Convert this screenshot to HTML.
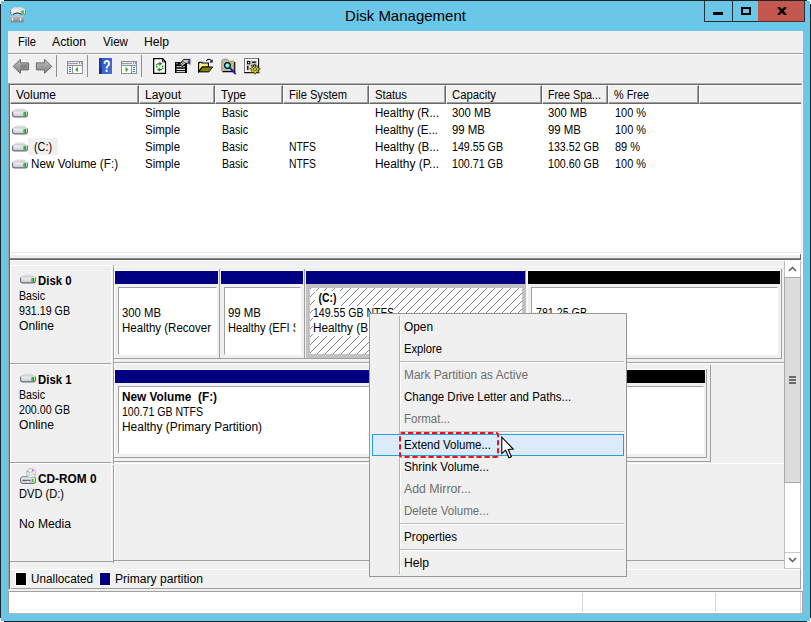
<!DOCTYPE html>
<html lang="en">
<head>
<meta charset="utf-8">
<title>Disk Management</title>
<style>
*{box-sizing:border-box;margin:0;padding:0}
html,body{width:811px;height:622px;overflow:hidden;background:#fff}
body{position:relative;font-family:"Liberation Sans",sans-serif;font-size:12px;color:#000;line-height:1}
.a,.t{position:absolute}
.t{white-space:nowrap;font-size:12px;line-height:14px;height:14px;transform-origin:0 0}
.b{font-weight:bold}
.w{background:#fff;height:15px !important}
#win{position:absolute;left:0;top:0;width:811px;height:622px;background:#6ac7e8;border-radius:4px}
.fb{position:absolute;background:#1c2428}
#client{position:absolute;left:8px;top:31px;width:795px;height:583px;background:#f0f0f0}
#title{position:absolute;left:0;top:7px;width:811px;text-align:center;font-size:15px;line-height:18px;color:#000}
.cap{position:absolute;top:1px;height:21px}
.g{color:#6d6d6d}
.hd{position:absolute;top:85px;height:19px;background:#f0f0f0;border-left:1px solid #fff;border-top:1px solid #fff;border-right:1px solid #696969;border-bottom:1px solid #696969;box-shadow:inset -1px -1px 0 #a0a0a0}
.bar{position:absolute;height:13px;background:#000080}
.box{position:absolute;height:68px;background:#fff;border:1px solid #a0a0a0;border-right-color:#fff;border-bottom-color:#fff}
.mi{position:absolute;left:404px;white-space:nowrap;font-size:12px;line-height:14px;height:14px;transform-origin:0 0}
.ms{position:absolute;left:400px;width:224px;height:2px;background:#fff;border-top:1px solid #bdbdbd}
</style>
</head>
<body>
<div id="win"></div>
<div class="a" style="left:0px;top:0px;width:4px;height:1px;background:#fff"></div><div class="a" style="left:807px;top:0px;width:4px;height:1px;background:#fff"></div><div class="a" style="left:0px;top:621px;width:4px;height:1px;background:#fff"></div><div class="a" style="left:807px;top:621px;width:4px;height:1px;background:#fff"></div><div class="a" style="left:0px;top:0px;width:1px;height:4px;background:#fff"></div><div class="a" style="left:810px;top:0px;width:1px;height:4px;background:#fff"></div><div class="a" style="left:0px;top:618px;width:1px;height:4px;background:#fff"></div><div class="a" style="left:810px;top:618px;width:1px;height:4px;background:#fff"></div><div class="fb" style="left:4px;top:0;width:803px;height:1px"></div><div class="fb" style="left:4px;top:621px;width:803px;height:1px"></div><div class="fb" style="left:0;top:4px;width:1px;height:614px"></div><div class="fb" style="left:810px;top:4px;width:1px;height:614px"></div>
<div id="title">Disk Management</div>

<div class="cap" style="left:704px;width:29px;border:1px solid #1f3038;border-top:0"></div>
<div class="cap" style="left:732px;width:27px;border:1px solid #1f3038;border-top:0;border-right:0"></div>
<div class="cap" style="left:758px;width:47px;background:#c5584e;border-right:1px solid #1f3038;border-bottom:1px solid #5a2a28"></div>
<div class="a" style="left:713px;top:12px;width:10px;height:3px;background:#000"></div>
<div class="a" style="left:741px;top:7px;width:10px;height:8px;border:2px solid #000"></div>
<svg class="a" style="left:777px;top:7px" width="10" height="8" viewBox="0 0 10 8"><path d="M1.2 0 L8.8 8 M8.8 0 L1.2 8" stroke="#000" stroke-width="2.5"/></svg>
<div id="client"></div>

<div class="t" style="left:18px;top:35px;transform:scaleX(0.931)">File</div>
<div class="t" style="left:52px;top:35px;transform:scaleX(1.019)">Action</div>
<div class="t" style="left:103px;top:35px;transform:scaleX(0.969)">View</div>
<div class="t" style="left:144px;top:35px;transform:scaleX(1.013)">Help</div>
<div class="a" style="left:8px;top:53px;width:795px;height:1px;background:#a0a0a0"></div>
<div class="a" style="left:8px;top:54px;width:795px;height:1px;background:#fff"></div>
<div class="a" style="left:56px;top:55px;width:1px;height:22px;background:#8e8e8e"></div>
<div class="a" style="left:87px;top:55px;width:1px;height:22px;background:#8e8e8e"></div>
<div class="a" style="left:141px;top:55px;width:1px;height:22px;background:#8e8e8e"></div>

<div class="a" style="left:8px;top:83px;width:794px;height:1px;background:#b4b4b4"></div>
<div class="a" style="left:9px;top:253px;width:794px;height:2px;background:#fff"></div><div class="a" style="left:802px;top:84px;width:1px;height:171px;background:#fff"></div>
<div class="a" style="left:9px;top:84px;width:793px;height:169px;background:#fff;border-left:1px solid #696969;border-top:1px solid #696969;border-right:1px solid #e3e3e3;border-bottom:1px solid #e8e8e8"></div>
<div class="hd" style="left:10px;width:129px"></div><div class="t" style="left:16px;top:88px;transform:scaleX(0.999)">Volume</div>
<div class="hd" style="left:139px;width:76px"></div><div class="t" style="left:145px;top:88px;transform:scaleX(0.999)">Layout</div>
<div class="hd" style="left:215px;width:68px"></div><div class="t" style="left:221px;top:88px;transform:scaleX(0.961)">Type</div>
<div class="hd" style="left:283px;width:86px"></div><div class="t" style="left:289px;top:88px;transform:scaleX(0.925)">File System</div>
<div class="hd" style="left:369px;width:77px"></div><div class="t" style="left:375px;top:88px;transform:scaleX(0.941)">Status</div>
<div class="hd" style="left:446px;width:96px"></div><div class="t" style="left:452px;top:88px;transform:scaleX(0.942)">Capacity</div>
<div class="hd" style="left:542px;width:66px"></div><div class="t" style="left:548px;top:88px;transform:scaleX(0.893)">Free Spa...</div>
<div class="hd" style="left:608px;width:91px"></div><div class="t" style="left:614px;top:88px;transform:scaleX(0.905)">% Free</div>
<div class="hd" style="left:699px;width:102px;border-right:0;box-shadow:inset 0 -1px 0 #a0a0a0"></div><svg class="a" style="left:12px;top:108px" width="16" height="10" viewBox="0 0 16 10"><use href="#drv"/></svg><div class="t" style="left:145px;top:106px;transform:scaleX(0.954)">Simple</div><div class="t" style="left:222px;top:106px;transform:scaleX(0.886)">Basic</div><div class="t" style="left:375px;top:106px;transform:scaleX(0.960)">Healthy (R...</div><div class="t" style="left:452px;top:106px;transform:scaleX(0.943)">300 MB</div><div class="t" style="left:548px;top:106px;transform:scaleX(0.943)">300 MB</div><div class="t" style="left:615px;top:106px;transform:scaleX(0.911)">100 %</div>
<svg class="a" style="left:12px;top:125px" width="16" height="10" viewBox="0 0 16 10"><use href="#drv"/></svg><div class="t" style="left:145px;top:123px;transform:scaleX(0.954)">Simple</div><div class="t" style="left:222px;top:123px;transform:scaleX(0.886)">Basic</div><div class="t" style="left:375px;top:123px;transform:scaleX(0.954)">Healthy (E...</div><div class="t" style="left:452px;top:123px;transform:scaleX(0.951)">99 MB</div><div class="t" style="left:548px;top:123px;transform:scaleX(0.951)">99 MB</div><div class="t" style="left:615px;top:123px;transform:scaleX(0.911)">100 %</div>
<div class="a" style="left:28px;top:138px;width:30px;height:17px;background:#f0f0f0"></div><svg class="a" style="left:12px;top:142px" width="16" height="10" viewBox="0 0 16 10"><use href="#drv"/></svg><div class="t" style="left:34px;top:140px;transform:scaleX(0.900)">(C:)</div><div class="t" style="left:145px;top:140px;transform:scaleX(0.954)">Simple</div><div class="t" style="left:222px;top:140px;transform:scaleX(0.886)">Basic</div><div class="t" style="left:289px;top:140px;transform:scaleX(0.862)">NTFS</div><div class="t" style="left:375px;top:140px;transform:scaleX(0.969)">Healthy (B...</div><div class="t" style="left:452px;top:140px;transform:scaleX(0.889)">149.55 GB</div><div class="t" style="left:548px;top:140px;transform:scaleX(0.889)">133.52 GB</div><div class="t" style="left:615px;top:140px;transform:scaleX(0.914)">89 %</div>
<svg class="a" style="left:12px;top:159px" width="16" height="10" viewBox="0 0 16 10"><use href="#drv"/></svg><div class="t" style="left:31px;top:157px;transform:scaleX(0.974)">New Volume (F:)</div><div class="t" style="left:145px;top:157px;transform:scaleX(0.954)">Simple</div><div class="t" style="left:222px;top:157px;transform:scaleX(0.886)">Basic</div><div class="t" style="left:289px;top:157px;transform:scaleX(0.862)">NTFS</div><div class="t" style="left:375px;top:157px;transform:scaleX(0.993)">Healthy (P...</div><div class="t" style="left:452px;top:157px;transform:scaleX(0.889)">100.71 GB</div><div class="t" style="left:548px;top:157px;transform:scaleX(0.889)">100.60 GB</div><div class="t" style="left:615px;top:157px;transform:scaleX(0.911)">100 %</div>

<div class="a" style="left:9px;top:258px;width:792px;height:1px;background:#858585"></div>
<div class="a" style="left:9px;top:259px;width:792px;height:1px;background:#696969"></div>
<div class="a" style="left:8px;top:83px;width:1px;height:507px;background:#a0a0a0"></div>
<div class="a" style="left:9px;top:84px;width:1px;height:505px;background:#696969"></div>
<div class="a" style="left:10px;top:260px;width:791px;height:1px;background:#fafafa"></div>
<div class="a" style="left:800px;top:254px;width:1px;height:6px;background:#696969"></div>
<div class="a" style="left:10px;top:265px;width:101px;height:1px;background:#fff"></div><div class="a" style="left:10px;top:265px;width:1px;height:98px;background:#fff"></div><div class="a" style="left:10px;top:363px;width:101px;height:1px;background:#a0a0a0"></div><div class="a" style="left:111px;top:265px;width:1px;height:98px;background:#fafafa"></div><div class="a" style="left:113px;top:265px;width:1px;height:1px;background:#a0a0a0"></div><div class="a" style="left:113px;top:267px;width:1px;height:98px;background:#a0a0a0"></div><div class="a" style="left:114px;top:267px;width:1px;height:95px;background:#fff"></div><svg class="a" style="left:20px;top:274px" width="16" height="10" viewBox="0 0 16 10"><use href="#drv"/></svg><div class="t b" style="left:38px;top:274px;transform:scaleX(0.948)">Disk 0</div><div class="t" style="left:19px;top:289px;transform:scaleX(0.886)">Basic</div><div class="t" style="left:19px;top:304px;transform:scaleX(0.889)">931.19 GB</div><div class="t" style="left:19px;top:319px;transform:scaleX(1.009)">Online</div>
<div class="a" style="left:10px;top:364px;width:101px;height:1px;background:#fff"></div><div class="a" style="left:10px;top:364px;width:1px;height:98px;background:#fff"></div><div class="a" style="left:10px;top:462px;width:101px;height:1px;background:#a0a0a0"></div><div class="a" style="left:111px;top:364px;width:1px;height:98px;background:#fafafa"></div><div class="a" style="left:113px;top:364px;width:1px;height:1px;background:#a0a0a0"></div><div class="a" style="left:113px;top:366px;width:1px;height:98px;background:#a0a0a0"></div><div class="a" style="left:114px;top:366px;width:1px;height:95px;background:#fff"></div><svg class="a" style="left:20px;top:373px" width="16" height="10" viewBox="0 0 16 10"><use href="#drv"/></svg><div class="t b" style="left:38px;top:373px;transform:scaleX(0.948)">Disk 1</div><div class="t" style="left:19px;top:388px;transform:scaleX(0.886)">Basic</div><div class="t" style="left:19px;top:403px;transform:scaleX(0.889)">200.00 GB</div><div class="t" style="left:19px;top:418px;transform:scaleX(1.009)">Online</div>
<div class="a" style="left:10px;top:463px;width:101px;height:1px;background:#fff"></div><div class="a" style="left:10px;top:463px;width:1px;height:98px;background:#fff"></div><div class="a" style="left:10px;top:561px;width:101px;height:1px;background:#a0a0a0"></div><div class="a" style="left:111px;top:463px;width:1px;height:98px;background:#fafafa"></div><div class="a" style="left:113px;top:463px;width:1px;height:1px;background:#a0a0a0"></div><div class="a" style="left:113px;top:465px;width:1px;height:98px;background:#a0a0a0"></div><div class="a" style="left:114px;top:465px;width:1px;height:95px;background:#fff"></div><svg class="a" style="left:20px;top:467px" width="16" height="17" viewBox="0 0 16 17"><use href="#cd"/></svg><div class="t b" style="left:38px;top:472px;transform:scaleX(0.986)">CD-ROM 0</div><div class="t" style="left:19px;top:487px;transform:scaleX(0.925)">DVD (D:)</div><div class="t" style="left:19px;top:517px;transform:scaleX(1.013)">No Media</div>

<div class="a" style="left:114px;top:270px;width:668px;height:1px;background:#fff"></div><div class="a" style="left:115px;top:266px;width:669px;height:1px;background:#f9f9f9"></div>
<div class="a" style="left:114px;top:358px;width:668px;height:1px;background:#a0a0a0"></div>
<div class="a" style="left:114px;top:362px;width:671px;height:1px;background:#a0a0a0"></div>
<div class="a" style="left:114px;top:363px;width:671px;height:1px;background:#fff"></div>
<div class="bar" style="left:115px;top:271px;width:103px"></div>
<div class="a" style="left:219px;top:269px;width:1px;height:90px;background:#a0a0a0"></div>
<div class="box" style="left:118px;top:287px;width:99px"></div>
<div class="t" style="left:122px;top:306px;transform:scaleX(0.943)">300 MB</div>
<div class="t" style="left:122px;top:321px;transform:scaleX(0.960)">Healthy (Recover</div>

<div class="bar" style="left:221px;top:271px;width:82px"></div>
<div class="a" style="left:304px;top:269px;width:1px;height:90px;background:#a0a0a0"></div>
<div class="box" style="left:224px;top:287px;width:77px"></div>
<div class="t" style="left:228px;top:306px;transform:scaleX(0.951)">99 MB</div>
<div class="t" style="left:228px;top:321px;width:73px;overflow:hidden;transform:scaleX(0.923)">Healthy (EFI S</div>

<div class="bar" style="left:306px;top:271px;width:219px"></div>
<div class="a" style="left:306px;top:284px;width:220px;height:74px;background:#c0c0c0"></div>
<div class="a" style="left:310px;top:288px;width:212px;height:66px;background:#fff;background-image:repeating-linear-gradient(135deg,#858585 0,#858585 0.75px,transparent 0.75px,transparent 5.657px)"></div>
<div class="t b w" style="left:315px;top:291px;padding:0 4px;transform:scaleX(0.871)">(C:)</div>
<div class="t w" style="left:313px;top:306px;transform:scaleX(0.880)">149.55 GB NTFS</div>
<div class="t w" style="left:313px;top:321px;padding-right:8px;transform:scaleX(0.982)">Healthy (B</div>
<div class="a" style="left:526px;top:270px;width:2px;height:88px;background:#fbfbfb"></div><div class="a" style="left:525px;top:270px;width:1px;height:14px;background:#a0a0a0"></div>

<div class="bar" style="left:528px;top:271px;width:252px;background:#000"></div>
<div class="a" style="left:781px;top:269px;width:1px;height:90px;background:#a0a0a0"></div>
<div class="box" style="left:531px;top:287px;width:247px"></div>
<div class="t" style="left:536px;top:306px;transform:scaleX(0.889)">781.25 GB</div>

<div class="a" style="left:114px;top:369px;width:593px;height:1px;background:#fff"></div>
<div class="a" style="left:114px;top:457px;width:593px;height:1px;background:#a0a0a0"></div>
<div class="a" style="left:114px;top:461px;width:597px;height:1px;background:#a0a0a0"></div>
<div class="a" style="left:114px;top:463px;width:671px;height:1px;background:#fff"></div>
<div class="a" style="left:710px;top:365px;width:1px;height:97px;background:#a0a0a0"></div>
<div class="a" style="left:114px;top:560px;width:671px;height:1px;background:#a0a0a0"></div>
<div class="bar" style="left:115px;top:370px;width:400px"></div>
<div class="box" style="left:118px;top:386px;width:400px"></div>
<div class="t b" style="left:122px;top:390px;transform:scaleX(0.985)">New Volume&nbsp; (F:)</div>
<div class="t" style="left:122px;top:405px;transform:scaleX(0.880)">100.71 GB NTFS</div>
<div class="t" style="left:122px;top:420px;transform:scaleX(0.995)">Healthy (Primary Partition)</div>
<div class="bar" style="left:560px;top:370px;width:145px;background:#000"></div>
<div class="box" style="left:560px;top:386px;width:144px"></div>
<div class="a" style="left:706px;top:369px;width:1px;height:89px;background:#a0a0a0"></div>

<div class="a" style="left:801px;top:255px;width:2px;height:335px;background:#fcfcfc"></div>
<div class="a" style="left:784px;top:261px;width:17px;height:308px;background:#fff;border-left:1px solid #bdbdbd;border-right:1px solid #bdbdbd"></div>
<div class="a" style="left:784px;top:277px;width:17px;height:206px;background:#dcdcdc;border:1px solid #ababab"></div>
<div class="a" style="left:785px;top:552px;width:15px;height:1px;background:#c8c8c8"></div>
<div class="a" style="left:785px;top:568px;width:15px;height:1px;background:#c8c8c8"></div>
<svg class="a" style="left:787px;top:265px" width="11" height="8" viewBox="0 0 11 8"><path d="M2 6 L5.5 2.5 L9 6" fill="none" stroke="#5a5a5a" stroke-width="1.5"/></svg>
<svg class="a" style="left:787px;top:556px" width="11" height="8" viewBox="0 0 11 8"><path d="M2 2 L5.5 5.5 L9 2" fill="none" stroke="#5a5a5a" stroke-width="1.5"/></svg>
<div class="a" style="left:789px;top:376px;width:7px;height:2px;background:#6a6a6a"></div>
<div class="a" style="left:789px;top:379px;width:7px;height:2px;background:#6a6a6a"></div>
<div class="a" style="left:789px;top:382px;width:7px;height:2px;background:#6a6a6a"></div>

<div class="a" style="left:11px;top:561px;width:102px;height:1px;background:#a0a0a0"></div>
<div class="a" style="left:11px;top:569px;width:790px;height:1px;background:#fff"></div>
<div class="a" style="left:11px;top:588px;width:790px;height:1px;background:#a0a0a0"></div>
<div class="a" style="left:800px;top:569px;width:1px;height:20px;background:#a0a0a0"></div>
<div class="a" style="left:15px;top:572px;width:12px;height:14px;background:#000;border:1px solid #fff"></div>
<div class="t" style="left:31px;top:572px;transform:scaleX(0.978)">Unallocated</div>
<div class="a" style="left:99px;top:572px;width:12px;height:14px;background:#000080;border:1px solid #fff"></div>
<div class="t" style="left:115px;top:572px;transform:scaleX(1.007)">Primary partition</div>
<div class="a" style="left:8px;top:591px;width:795px;height:23px;background:#fff;border-top:1px solid #a0a0a0;border-left:1px solid #a0a0a0;border-bottom:1px solid #b4b4b4"></div>
<div class="a" style="left:582px;top:593px;width:1px;height:19px;background:#d7d7d7"></div>
<div class="a" style="left:715px;top:593px;width:1px;height:19px;background:#d7d7d7"></div>
<div class="a" style="left:800px;top:592px;width:1px;height:21px;background:#d8d8d8"></div>
<div class="a" style="left:802px;top:591px;width:1px;height:23px;background:#a8a8a8"></div>

<div class="a" style="left:369px;top:313px;width:258px;height:264px;background:#f0f0f0;border:1px solid #979797"></div>
<div class="a" style="left:399px;top:316px;width:1px;height:258px;background:#b6b6b6"></div>
<div class="a" style="left:400px;top:316px;width:1px;height:258px;background:#fff"></div>
<div class="a" style="left:372px;top:434px;width:252px;height:22px;background:#dcebfc;border:1px solid #26a0da"></div>
<div class="mi" style="top:320px;transform:scaleX(0.988)">Open</div>
<div class="mi" style="top:342px;transform:scaleX(0.934)">Explore</div>
<div class="ms" style="top:361px"></div>
<div class="mi g" style="top:368px;transform:scaleX(0.989)">Mark Partition as Active</div>
<div class="mi" style="top:390px;transform:scaleX(0.956)">Change Drive Letter and Paths...</div>
<div class="mi g" style="top:412px;transform:scaleX(0.958)">Format...</div>
<div class="ms" style="top:431px"></div>
<div class="mi" style="top:438px;transform:scaleX(0.959)">Extend Volume...</div>
<div class="mi" style="top:460px;transform:scaleX(0.973)">Shrink Volume...</div>
<div class="mi g" style="top:482px;transform:scaleX(1.025)">Add Mirror...</div>
<div class="mi g" style="top:504px;transform:scaleX(0.965)">Delete Volume...</div>
<div class="ms" style="top:523px"></div>
<div class="mi" style="top:530px;transform:scaleX(0.969)">Properties</div>
<div class="ms" style="top:549px"></div>
<div class="mi" style="top:556px;transform:scaleX(1.013)">Help</div>
<svg class="a" style="left:398px;top:431px" width="103" height="28" viewBox="0 0 103 28"><rect x="2" y="2" width="98" height="24" rx="2" fill="none" stroke="#f4101a" stroke-width="2" stroke-dasharray="5.2 2.8" stroke-dashoffset="2"/></svg>
<svg class="a" style="left:501px;top:436px" width="14" height="24" viewBox="0 0 14 24"><path d="M.8 1.2 L.8 17.6 L4.6 14.2 L8 21.8 L10.4 20.8 L7.2 13.4 L12.2 13 Z" fill="#fff" stroke="#000" stroke-width="1.1" stroke-linejoin="miter"/></svg>

<svg width="0" height="0" style="position:absolute">
<defs>
<linearGradient id="dg" x1="0" y1="0" x2="0" y2="1"><stop offset="0" stop-color="#f6f6fa"/><stop offset="1" stop-color="#c2c4d0"/></linearGradient>
<g id="drv"><path d="M4 .5 H12.2 L15.3 3.4 H.7 Z" fill="#dfdfe3"/><path d="M.6 4.4 Q.6 3 2.2 3 H13.8 Q15.4 3 15.4 4.4 V7 Q15.4 8.9 13.4 8.9 H2.6 Q.6 8.9 .6 7 Z" fill="url(#dg)"/><path d="M.6 3.4 V7 Q.6 8.9 2.6 8.9 H13.4 Q15.4 8.9 15.4 7 V3.4" fill="none" stroke="#6b6d7b" stroke-width="1.1"/><path d="M1.2 3 H14.8" stroke="#b9bac4" stroke-width=".7"/><rect x="11.3" y="3.9" width="2" height="4" fill="#2bd11f"/><rect x="13.1" y="3.9" width=".8" height="4" fill="#4a5a4a"/></g>
<g id="cd"><rect x=".6" y="9.8" width="15" height="6.7" rx="2" fill="url(#dg)" stroke="#6b6d7b" stroke-width="1"/><rect x="2.4" y="12.8" width="8" height="1.2" rx=".6" fill="#5c5e6a"/><rect x="7" y="13.8" width="1.6" height=".9" fill="#fff"/><rect x="11.6" y="11.6" width="1.8" height="3.6" fill="#2bd11f"/><circle cx="11" cy="6.2" r="4.7" fill="#eef0f4" stroke="#a9adb6" stroke-width=".7"/><path d="M11 6.2 L6.8 5 A4.4 4.4 0 0 1 7.6 3.4 Z" fill="#3fd63a" opacity=".8"/><path d="M11 6.2 L12.6 2 A4.4 4.4 0 0 1 14 3 Z" fill="#d23be0" opacity=".85"/><path d="M11 6.2 L15.2 7 A4.4 4.4 0 0 1 14.6 8.6 Z" fill="#f0b060" opacity=".8"/><path d="M11 6.2 L8 9.4 A4.4 4.4 0 0 1 7 8 Z" fill="#b9a0e8" opacity=".7"/><circle cx="11" cy="6.2" r="1.3" fill="#fff" stroke="#b9bdc6" stroke-width=".5"/></g>
</defs>
</svg>
<!-- app icon -->
<svg class="a" style="left:10px;top:7px" width="16" height="16" viewBox="0 0 16 16">
<defs>
<linearGradient id="ai1" x1="0" y1="0" x2="0" y2="1"><stop offset="0" stop-color="#fdfdff"/><stop offset=".4" stop-color="#e9e9f3"/><stop offset="1" stop-color="#cfd0de"/></linearGradient>
<linearGradient id="ai2" x1="0" y1="0" x2="0" y2="1"><stop offset="0" stop-color="#d3dbe2"/><stop offset=".22" stop-color="#a9b5be"/><stop offset="1" stop-color="#78848e"/></linearGradient>
</defs>
<path d="M3.8 .3 H12.2 L15 2.7 H1 Z" fill="#dcdcde"/>
<path d="M.5 3.4 Q.5 2.5 1.6 2.5 H14.4 Q15.5 2.5 15.5 3.4 V6.6 Q15.5 7.9 14.2 7.9 H1.8 Q.5 7.9 .5 6.6 Z" fill="url(#ai1)"/>
<path d="M.6 3 V6.6 Q.6 7.8 1.8 7.8 M15.4 3 V6.6 Q15.4 7.8 14.2 7.8" fill="none" stroke="#6a6e86" stroke-width=".9"/>
<path d="M3 7.6 Q7.4 4.4 11.8 7.6" fill="none" stroke="#151515" stroke-width="1.1"/>
<rect x="11.2" y="3.3" width="1.7" height="4.3" fill="#25d81c"/><rect x="13.3" y="3.4" width=".7" height="4.2" fill="#6a6e86"/>
<rect x=".3" y="8.7" width="13.7" height="6.9" rx=".5" fill="url(#ai2)"/>
<rect x="1.8" y="11" width="1.3" height="2.5" rx=".5" fill="#f6f8fa"/><rect x="9.8" y="11" width="1.3" height="2.5" rx=".5" fill="#f6f8fa"/>
</svg>

<!-- back / forward -->
<svg class="a" style="left:12px;top:58px" width="42" height="17" viewBox="0 0 42 17">
<defs><linearGradient id="ag" x1="0" y1="0" x2="0" y2="1"><stop offset="0" stop-color="#c2c2c2"/><stop offset=".5" stop-color="#a0a0a0"/><stop offset="1" stop-color="#8a8a8a"/></linearGradient></defs>
<path d="M1.2 8.4 L8.4 1.4 V4.9 H16.6 V11.9 H8.4 V15.4 Z" fill="url(#ag)" stroke="#666" stroke-width="1" stroke-linejoin="round"/>
<rect x="8.6" y="6.4" width="6.6" height="4" fill="#7a7a7a" opacity=".8"/><rect x="25.8" y="6.4" width="6.6" height="4" fill="#7a7a7a" opacity=".8"/>
<path d="M39.8 8.4 L32.6 1.4 V4.9 H24.4 V11.9 H32.6 V15.4 Z" fill="url(#ag)" stroke="#6a6a6a" stroke-width="1" stroke-linejoin="round"/>
</svg>

<!-- show/hide console tree -->
<svg class="a" style="left:67px;top:61px" width="16" height="13" viewBox="0 0 16 13" shape-rendering="crispEdges">
<rect x=".5" y=".5" width="15" height="12" fill="#fff" stroke="#8b909a"/>
<rect x="1" y="1" width="14" height="3" fill="#e6e8ec"/><rect x="1" y="2" width="10" height="1" fill="#9a9ea8"/><rect x="12" y="1" width="1" height="2" fill="#9a9ea8"/><rect x="14" y="1" width="1" height="2" fill="#9a9ea8"/>
<rect x="1" y="4" width="14" height="1" fill="#8b909a"/>
<rect x="5" y="5" width="1" height="7" fill="#8b909a"/>
<rect x="1" y="5" width="4" height="7" fill="#f4f6f8"/>
<rect x="2" y="6" width="2" height="1" fill="#2f7fd0"/><rect x="2" y="8" width="2" height="1" fill="#2f7fd0"/><rect x="2" y="10" width="2" height="1" fill="#2f7fd0"/>
<path d="M8 8.5 L11 5.7 V11.3 Z" fill="#3cb51e" shape-rendering="auto"/>
</svg>

<!-- help -->
<svg class="a" style="left:99px;top:58px" width="13" height="16" viewBox="0 0 13 16">
<defs><linearGradient id="hg" x1="0" y1="0" x2="1" y2="1"><stop offset="0" stop-color="#2b55c6"/><stop offset="1" stop-color="#4a6fd6"/></linearGradient></defs>
<rect width="13" height="16" fill="url(#hg)"/><rect width="2.6" height="16" fill="#1b3aa6"/><rect y="10" width="2.6" height="6" fill="#162f8a"/>
<text transform="translate(7.6 14) scale(.74 1)" text-anchor="middle" font-family="Liberation Sans, sans-serif" font-weight="bold" font-size="16.5" fill="#fff">?</text>
</svg>

<!-- console tree mirrored -->
<svg class="a" style="left:121px;top:61px" width="16" height="13" viewBox="0 0 16 13" shape-rendering="crispEdges">
<rect x=".5" y=".5" width="15" height="12" fill="#fff" stroke="#8b909a"/>
<rect x="1" y="1" width="14" height="3" fill="#e6e8ec"/><rect x="1" y="2" width="10" height="1" fill="#9a9ea8"/><rect x="12" y="1" width="1" height="2" fill="#9a9ea8"/><rect x="14" y="1" width="1" height="2" fill="#9a9ea8"/>
<rect x="1" y="4" width="14" height="1" fill="#8b909a"/>
<rect x="10" y="5" width="1" height="7" fill="#8b909a"/>
<rect x="11" y="5" width="4" height="7" fill="#f4f6f8"/>
<rect x="12" y="6" width="2" height="1" fill="#2f7fd0"/><rect x="12" y="8" width="2" height="1" fill="#2f7fd0"/><rect x="12" y="10" width="2" height="1" fill="#2f7fd0"/>
<path d="M7.5 8.5 L4.5 5.7 V11.3 Z" fill="#3cb51e" shape-rendering="auto"/>
</svg>

<!-- refresh -->
<svg class="a" style="left:153px;top:58px" width="14" height="16" viewBox="0 0 14 16">
<path d="M.65 .65 H9.6 L12.5 3.8 V15.35 H.65 Z" fill="#fff" stroke="#000" stroke-width="1.25"/>
<path d="M9.4 .8 V3.9 H12.4" fill="none" stroke="#000" stroke-width=".9"/>
<g fill="#0f8c0f">
<path d="M6.4 3.6 L9.2 5.8 L6.4 8 Z"/><rect x="4.4" y="5.1" width="2.4" height="1.4"/>
<rect x="3" y="6.2" width="1.4" height="1.4"/><rect x="3" y="8.2" width="1.4" height="1.4"/>
<path d="M6.8 9.4 L4 11.6 L6.8 13.8 Z"/><rect x="6.4" y="10.9" width="2.6" height="1.4"/>
<rect x="9" y="9.6" width="1.4" height="1.6"/><rect x="9" y="7.6" width="1.4" height="1.4"/>
</g>
</svg>

<!-- properties -->
<svg class="a" style="left:175px;top:58px" width="16" height="16" viewBox="0 0 16 16">
<rect x="0" y="4.1" width="12" height="10.9" fill="#000"/>
<rect x="1.4" y="5.2" width="1.1" height="1.1" fill="#fff"/>
<rect x="1.4" y="8.2" width="8.6" height="1.1" fill="#d4d4d4"/><rect x="1.4" y="10.8" width="8.6" height="1.1" fill="#fff"/><rect x="1.4" y="13.2" width="8.6" height="1" fill="#fff"/>
<path d="M3.4 7.4 L8 2.2 L8.6 1.4 H14 V5.2 H10.8 L7.4 8.6 L6 7.2 Z" fill="#c6c6c6" stroke="#000" stroke-width=".9" stroke-linejoin="round"/>
<path d="M5.2 5.6 L7.2 7.6 M6.4 4.2 L8.6 6.4 M7.6 2.9 L9.8 5.1" stroke="#000" stroke-width=".7"/>
<rect x="14.3" y=".8" width="1.1" height="5.8" fill="#1010b0"/>
</svg>

<!-- open folder -->
<svg class="a" style="left:198px;top:58px" width="16" height="15" viewBox="0 0 16 15">
<defs><pattern id="chk" width="2" height="2" patternUnits="userSpaceOnUse"><rect width="2" height="2" fill="#fffde0"/><rect width="1" height="1" fill="#f4ee20"/><rect x="1" y="1" width="1" height="1" fill="#f4ee20"/></pattern></defs>
<path d="M.6 13.8 V5 H1.2 V4.2 H4 V5 H10.4 V9 H4 Z" fill="url(#chk)" stroke="#000" stroke-width="1.1" stroke-linejoin="miter"/>
<path d="M.9 13.9 L4.6 9 H14.6 L10.8 13.9 Z" fill="#808000" stroke="#000" stroke-width="1"/>
<path d="M8.2 3 Q10.8 -.4 13.4 2.6" fill="none" stroke="#000" stroke-width="1.1"/>
<path d="M14.6 1.2 V4.4 H11.4 Z" fill="#000"/>
</svg>

<!-- search -->
<svg class="a" style="left:221px;top:58px" width="16" height="17" viewBox="0 0 16 17">
<path d="M1.4 13.6 H13.6 V4 " fill="none" stroke="#000" stroke-width="1.4"/>
<path d="M.5 12.6 V2.8 L2.2 1 H6.4 L7.8 3 H12.9 V12.6 Z" fill="#a9a9a9" stroke="#8a8a8a" stroke-width=".6"/>
<g fill="#f6f01e"><rect x="2" y="2.2" width="1" height="1"/><rect x="4" y="2.2" width="1" height="1"/><rect x="6" y="2.6" width="1" height="1"/><rect x="3" y="3.4" width="1" height="1"/><rect x="1.6" y="4.6" width="1" height="1"/><rect x="2.4" y="6.4" width="1" height="1"/><rect x="1.6" y="8" width="1" height="1"/><rect x="2.6" y="9.6" width="1" height="1"/><rect x="1.8" y="11" width="1" height="1"/><rect x="3.8" y="11.2" width="1" height="1"/><rect x="5.8" y="11.4" width="1" height="1"/><rect x="7.8" y="11" width="1" height="1"/><rect x="9.6" y="4.4" width="1" height="1"/><rect x="11" y="5.6" width="1" height="1"/><rect x="10.4" y="7.4" width="1" height="1"/><rect x="11.2" y="9" width="1" height="1"/><rect x="8.2" y="3.6" width="1" height="1"/><rect x="9.8" y="10.4" width="1" height="1"/><rect x="11.4" y="3.8" width="1" height="1"/></g>
<circle cx="6.4" cy="7.5" r="2.9" fill="#3ee6f0" stroke="#0a0a0a" stroke-width="1.2"/>
<circle cx="6.4" cy="7.5" r="1.3" fill="#a8f4f8"/>
<path d="M9.8 10.8 L14.4 15.8" stroke="#000" stroke-width="1.8" stroke-linecap="round" opacity=".5"/>
<path d="M9.2 10.2 L13.8 15.2" stroke="#1212e0" stroke-width="1.5" stroke-linecap="round"/>
</svg>

<!-- settings -->
<svg class="a" style="left:244px;top:58px" width="17" height="17" viewBox="0 0 17 17">
<rect x=".5" y=".5" width="14" height="14" fill="#fff" stroke="#7a7a7a" stroke-width="1"/>
<path d="M.4 14.6 H14.6 V.4" fill="none" stroke="#111" stroke-width="1.1"/>
<rect x="2.4" y="2.4" width="10.4" height="10.4" fill="#c2c2c2"/>
<rect x="3" y="3" width="3.2" height="3.2" fill="#111"/><rect x="4" y="4" width="1.2" height="1.2" fill="#fff"/>
<rect x="8" y="3.6" width="4" height="1.3" fill="#111"/>
<rect x="3" y="8" width="1.4" height="3.6" fill="#111"/><rect x="5.4" y="8" width="1.2" height="3.4" fill="#fff"/>
<rect x="8.6" y="6.6" width="1.2" height="3" fill="#111"/><rect x="11" y="6.6" width="1.2" height="3" fill="#111"/>
<path d="M10.6 6.2 L11.6 9 L14.2 7.2 L13.4 10 L16.4 10.8 L13.8 12.2 L15.4 15 L12.4 13.8 L11 16.6 L9.6 13.8 L6.6 14.8 L8.2 12 L5.6 10.4 L8.6 10 L7.4 7.2 L9.8 8.8 Z" fill="#f8f01a" stroke="#222200" stroke-width=".6"/>
<circle cx="11" cy="11.2" r="1.7" fill="#c2c2c2" stroke="#222200" stroke-width=".7"/>
</svg>

</body>
</html>
